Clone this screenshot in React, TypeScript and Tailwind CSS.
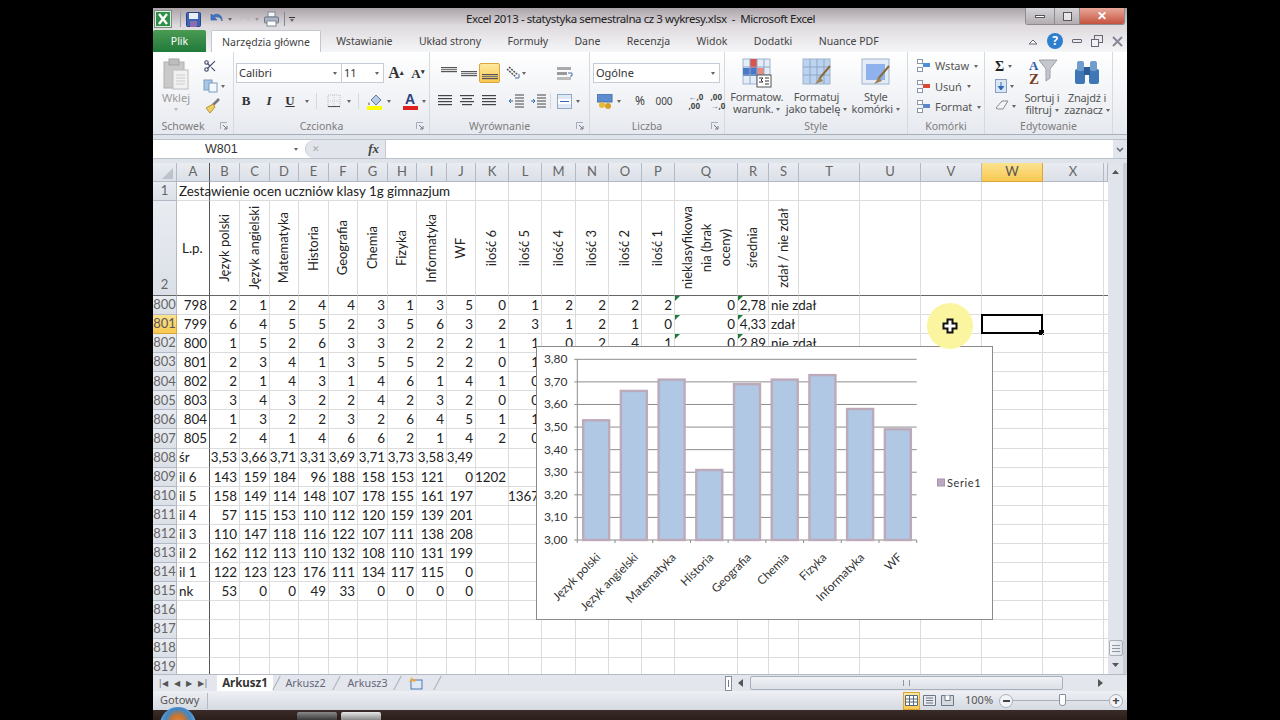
import React from 'react';
import { Scissors } from 'lucide-react';

const columns = ['A', 'B', 'C', 'D', 'E', 'F', 'G', 'H', 'I', 'J', 'K', 'L', 'M', 'N', 'O', 'P', 'Q', 'R', 'S', 'T', 'U', 'V', 'W', 'X'];

const subjects = ['Język polski', 'Język angielski', 'Matematyka', 'Historia', 'Geografia', 'Chemia', 'Fizyka', 'Informatyka', 'WF', 'ilość 6', 'ilość 5', 'ilość 4', 'ilość 3', 'ilość 2', 'ilość 1'];

const rows: Record<number, string[]> = {
    800: ['798', '2', '1', '2', '4', '4', '3', '1', '3', '5', '0', '1', '2', '2', '2', '2', '0', '2,78', 'nie zdał'],
    801: ['799', '6', '4', '5', '5', '2', '3', '5', '6', '3', '2', '3', '1', '2', '1', '0', '0', '4,33', 'zdał'],
    802: ['800', '1', '5', '2', '6', '3', '3', '2', '2', '2', '1', '1', '0', '2', '4', '1', '0', '2,89', 'nie zdał'],
    803: ['801', '2', '3', '4', '1', '3', '5', '5', '2', '2', '0', '1'],
    804: ['802', '2', '1', '4', '3', '1', '4', '6', '1', '4', '1', '0'],
    805: ['803', '3', '4', '3', '2', '2', '4', '2', '3', '2', '0', '0'],
    806: ['804', '1', '3', '2', '2', '3', '2', '6', '4', '5', '1', '1'],
    807: ['805', '2', '4', '1', '4', '6', '6', '2', '1', '4', '2', '0'],
    808: ['śr', '3,53', '3,66', '3,71', '3,31', '3,69', '3,71', '3,73', '3,58', '3,49'],
    809: ['il 6', '143', '159', '184', '96', '188', '158', '153', '121', '0', '1202'],
    810: ['il 5', '158', '149', '114', '148', '107', '178', '155', '161', '197', '', '1367'],
    811: ['il 4', '57', '115', '153', '110', '112', '120', '159', '139', '201'],
    812: ['il 3', '110', '147', '118', '116', '122', '107', '111', '138', '208'],
    813: ['il 2', '162', '112', '113', '110', '132', '108', '110', '131', '199'],
    814: ['il 1', '122', '123', '123', '176', '111', '134', '117', '115', '0'],
    815: ['nk', '53', '0', '0', '49', '33', '0', '0', '0', '0'],
    816: [], 817: [], 818: [], 819: [],
};

const chartData: [string, number][] = [
    ['Język polski', 3.53], ['Język angielski', 3.66], ['Matematyka', 3.71], ['Historia', 3.31], ['Geografia', 3.69],
    ['Chemia', 3.71], ['Fizyka', 3.73], ['Informatyka', 3.58], ['WF', 3.49],
];

function Caret({ className = '' }: { className?: string }) {
    return <span className={`inline-block h-0 w-0 border-x-[2.5px] border-t-[3px] border-x-transparent border-t-[#666] ${className}`} />;
}

function Slot({ className, children }: { className: string; children?: React.ReactNode }) {
    return <span className={`flex h-[20px] shrink-0 items-center justify-center ${className}`}>{children}</span>;
}

function Launcher() {
    return (
        <svg width="8" height="8" viewBox="0 0 8 8" className="mr-[5px] shrink-0">
            <path d="M.5 7V.5H7" fill="none" stroke="#aab" />
            <path d="M3 3l4 4M7 4v3H4" fill="none" stroke="#778" />
        </svg>
    );
}

function Group({ label, launcher, className, children }: { label: string; launcher?: boolean; className: string; children: React.ReactNode }) {
    return (
        <div className={`flex shrink-0 flex-col border-r border-[#d5d9e0] ${className}`}>
            <div className="h-[67px]">{children}</div>
            <div className="flex h-[16px] items-center text-[10.5px] text-[#7c7c7c]">
                <span className={`flex-1 text-center leading-none ${launcher ? 'pr-[7px]' : ''}`}>{label}</span>
                {launcher && <Launcher />}
            </div>
        </div>
    );
}

function Lines({ rows, size = 14 }: { rows: [number, number][]; size?: number }) {
    return (
        <svg width={size} height={size} viewBox="0 0 14 14">
            {rows.map(([x, y], i) => <rect key={i} x={x} y={y} width={14 - x * 2} height="1.2" fill="#444" />)}
        </svg>
    );
}

function AlignV({ y }: { y: number }) {
    return (
        <svg width="16" height="14" viewBox="0 0 16 14">
            <rect x="0" y={y} width="16" height="1.2" fill="#555" />
            <rect x="0" y={y + 2} width="16" height="1.2" fill="#777" />
            <rect x="0" y={y + 4} width="16" height="1.2" fill="#555" />
        </svg>
    );
}

function LargeIcon({ kind }: { kind: 'cond' | 'table' | 'cell' }) {
    return (
        <svg width="30" height="30" viewBox="0 0 30 30">
            <rect x="1" y="1" width="27" height="25" fill={kind === 'table' ? '#bcd3f0' : '#e4ecf7'} stroke="#9fb3cd" />
            {kind === 'cell' && <rect x="5" y="6" width="19" height="16" fill="#8fb2ec" />}
            {kind === 'cond' && <rect x="8" y="1" width="7" height="9" fill="#d9534a" />}
            {kind === 'cond' && <rect x="8" y="10" width="7" height="8" fill="#4a78c8" />}
            {kind === 'cond' && <rect x="1" y="10" width="7" height="8" fill="#4a78c8" />}
            {kind === 'cond' && <rect x="15" y="10" width="7" height="8" fill="#e88a7c" />}
            {kind !== 'cell' && <path d="M8 1v25M15 1v25M22 1v25M1 9h27M1 17h27" stroke="#8ea6c6" />}
            {kind === 'cond' && <rect x="15" y="17" width="14" height="12" fill="#fff" stroke="#555" />}
            {kind === 'cond' && <path d="M17 20h4l-2 2 2 2h-4M23 20h4M23 23h4M23 26h4" fill="none" stroke="#333" />}
            {kind !== 'cond' && <path d="M28 8L17 21" stroke="#8a6a3c" strokeWidth="2" />}
            {kind !== 'cond' && <path d="M18 19l-5 7 8-3z" fill="#a08050" />}
        </svg>
    );
}

function Ribbon() {
    return (
        <div className="flex h-[83px] shrink-0 border-b border-[#a9afb9] bg-gradient-to-b from-white to-[#e6e9ef] text-[#555]">
            <Group label="Schowek" launcher className="w-[81px]">
                <div className="flex pt-[4px]">
                    <div className="ml-[3px] flex w-[40px] flex-col items-center pt-[2px]">
                        <svg width="26" height="32" viewBox="0 0 26 32">
                            <rect x="1" y="4" width="20" height="26" fill="#c9c9c9" stroke="#b0b0b0" />
                            <rect x="6" y="1" width="10" height="6" fill="#bdbdbd" stroke="#a5a5a5" />
                            <rect x="10" y="12" width="15" height="19" fill="#f1f1f1" stroke="#bdbdbd" />
                            <path d="M13 17h9M13 20h9M13 23h9M13 26h9" stroke="#ccc" />
                        </svg>
                        <span className="mt-[1px] text-[11px] leading-[14px] text-[#9a9a9a]">Wklej</span>
                        <Caret className="mt-[3px] opacity-40" />
                    </div>
                    <div className="ml-[3px] flex flex-col">
                        <Slot className="w-[28px] justify-start pl-[4px]"><Scissors size={14} color="#46506a" strokeWidth={2} /></Slot>
                        <Slot className="w-[28px] gap-[3px] pl-[2px]">
                            <svg width="15" height="14" viewBox="0 0 15 14"><rect x="1" y="1" width="8" height="10" fill="#a9c6e8" stroke="#7d9cc0" /><rect x="6" y="4" width="8" height="9" fill="#f4f7fb" stroke="#7d9cc0" /></svg>
                            <Caret />
                        </Slot>
                        <Slot className="w-[28px] justify-start pl-[5px]">
                            <svg width="16" height="16" viewBox="0 0 16 16"><path d="M15 1L8 8" stroke="#777" strokeWidth="2.5" /><path d="M9 6L2 10l4 5 5-6z" fill="#f0cf62" stroke="#b59636" /></svg>
                        </Slot>
                    </div>
                </div>
            </Group>

            <Group label="Czcionka" launcher className="w-[196px]">
                <div className="mt-[11px] flex h-[20px] items-center pl-[2px] text-[11px] text-[#333]">
                    <div className="flex h-[20px] w-[106px] items-center justify-between border border-[#c6ccd5] bg-white pl-[2px] pr-[4px]">Calibri<Caret /></div>
                    <div className="flex h-[20px] w-[42px] items-center justify-between border-y border-r border-[#c6ccd5] bg-white pl-[2px] pr-[4px]">11<Caret /></div>
                    <Slot className="w-[24px]"><span className="font-['Liberation_Serif',serif] text-[16px] font-bold leading-none">A<sup className="text-[7px]">▴</sup></span></Slot>
                    <Slot className="w-[20px]"><span className="font-['Liberation_Serif',serif] text-[13px] font-bold leading-none">A<sup className="text-[7px]">▾</sup></span></Slot>
                </div>
                <div className="mt-[8px] flex items-center text-[#333]">
                    <Slot className="w-[24px] font-['Liberation_Serif',serif] text-[13px] font-bold">B</Slot>
                    <Slot className="w-[22px] font-['Liberation_Serif',serif] text-[13px] font-bold italic">I</Slot>
                    <Slot className="w-[20px] font-['Liberation_Serif',serif] text-[13px] font-bold underline">U</Slot>
                    <Slot className="w-[14px]"><Caret /></Slot>
                    <span className="ml-[2px] h-[16px] w-px bg-[#d5d9e0]" />
                    <Slot className="ml-[9px] w-[16px]">
                        <svg width="14" height="14" viewBox="0 0 14 14"><rect x="1" y="1" width="12" height="12" fill="none" stroke="#bbb" strokeDasharray="1 1" /><path d="M1 7h12M7 1v12" stroke="#ccc" strokeDasharray="1 1" /><path d="M1 12.5h12" stroke="#555" /></svg>
                    </Slot>
                    <Slot className="ml-[1px] w-[12px]"><Caret /></Slot>
                    <span className="ml-[3px] h-[16px] w-px bg-[#d5d9e0]" />
                    <Slot className="ml-[7px] w-[18px]">
                        <svg width="16" height="17" viewBox="0 0 16 17"><path d="M4 7l5-5 5 5-5 5z" fill="#b8cbe6" stroke="#64789a" /><path d="M2 9c-1 2-1 3 0 3s1-1 0-3" fill="#666" /><rect x="0" y="13" width="15" height="4" fill="#ffff00" /></svg>
                    </Slot>
                    <Slot className="w-[10px]"><Caret /></Slot>
                    <Slot className="ml-[7px] w-[18px]">
                        <span className="flex flex-col items-center">
                            <span className="font-['Liberation_Sans',sans-serif] text-[14px] font-bold leading-[13px] text-[#2b3f7a]">A</span>
                            <span className="h-[4px] w-[15px] bg-[#e02020]" />
                        </span>
                    </Slot>
                    <Slot className="w-[9px]"><Caret /></Slot>
                </div>
            </Group>

            <Group label="Wyrównanie" launcher className="w-[160px]">
                <div className="mt-[11px] flex items-center">
                    <Slot className="ml-[9px] w-[20px]"><AlignV y={1} /></Slot>
                    <Slot className="w-[20px]"><AlignV y={5} /></Slot>
                    <Slot className="w-[21px] rounded-[2px] border border-[#d9a53c] bg-gradient-to-b from-[#fde99c] to-[#fac84f]"><AlignV y={8} /></Slot>
                    <Slot className="w-[30px] gap-[2px]">
                        <svg width="15" height="14" viewBox="0 0 15 14"><path d="M2 3l9 8M4 1l9 8" stroke="#555" strokeWidth="1.5" strokeDasharray="2 1" /><path d="M10 12h4V8" fill="none" stroke="#4a6fa8" /></svg>
                        <Caret />
                    </Slot>
                    <Slot className="ml-[25px] w-[20px]">
                        <svg width="16" height="15" viewBox="0 0 16 15"><rect x="0" y="1" width="14" height="3" fill="#aaa" /><rect x="0" y="6" width="10" height="3" fill="#999" /><rect x="0" y="11" width="14" height="3" fill="#bbb" /><path d="M11 7h4v3h-2" fill="none" stroke="#4a6fa8" /></svg>
                    </Slot>
                </div>
                <div className="mt-[8px] flex items-center">
                    <Slot className="ml-[4px] w-[22px]"><Lines rows={[[0, 1], [0, 4], [0, 7], [0, 10]]} /></Slot>
                    <Slot className="w-[22px]"><Lines rows={[[0, 1], [2, 4], [0, 7], [2, 10]]} /></Slot>
                    <Slot className="w-[22px]"><Lines rows={[[0, 1], [0, 4], [0, 7], [0, 10]]} /></Slot>
                    <Slot className="ml-[5px] w-[22px]">
                        <svg width="16" height="14" viewBox="0 0 16 14"><path d="M7 1h9M7 4h9M7 7h9M7 10h9M7 13h9" stroke="#444" /><path d="M5 7H1M3 5L1 7l2 2" fill="none" stroke="#3468b0" /></svg>
                    </Slot>
                    <Slot className="w-[22px]">
                        <svg width="16" height="14" viewBox="0 0 16 14"><path d="M7 1h9M7 4h9M7 7h9M7 10h9M7 13h9" stroke="#444" /><path d="M1 7h4M3 5l2 2-2 2" fill="none" stroke="#3468b0" /></svg>
                    </Slot>
                    <span className="ml-[1px] h-[16px] w-px bg-[#d5d9e0]" />
                    <Slot className="ml-[6px] w-[15px]">
                        <svg width="15" height="15" viewBox="0 0 15 15"><rect x=".5" y=".5" width="14" height="14" fill="#dfe9f5" stroke="#93a8c4" /><rect x="1" y="5" width="13" height="5" fill="#fff" /><path d="M3 7.5h9" stroke="#3468b0" /></svg>
                    </Slot>
                    <Slot className="w-[12px]"><Caret /></Slot>
                </div>
            </Group>

            <Group label="Liczba" launcher className="w-[135px]">
                <div className="ml-[3px] mt-[11px] flex h-[20px] w-[127px] items-center justify-between border border-[#c6ccd5] bg-white pl-[2px] pr-[4px] text-[11px] text-[#333]">Ogólne<Caret /></div>
                <div className="mt-[8px] flex items-center text-[#444]">
                    <Slot className="ml-[7px] w-[16px]">
                        <svg width="16" height="15" viewBox="0 0 16 15"><rect x="0" y="0" width="15" height="8" fill="#5d8ccf" stroke="#466fa8" /><circle cx="5" cy="11" r="3" fill="#e8b93a" /><circle cx="11" cy="12" r="3" fill="#d59f24" /></svg>
                    </Slot>
                    <Slot className="w-[11px]"><Caret /></Slot>
                    <Slot className="ml-[6px] w-[20px] text-[12px]">%</Slot>
                    <Slot className="ml-[2px] w-[24px] text-[10px]">000</Slot>
                    <span className="ml-[2px] h-[16px] w-px bg-[#d5d9e0]" />
                    <Slot className="ml-[7px] w-[22px]">
                        <span className="flex flex-col text-[8px] font-bold leading-[9px]"><span><span className="text-[#3468b0]">←</span>,0</span><span>,00</span></span>
                    </Slot>
                    <Slot className="w-[22px]">
                        <span className="flex flex-col text-[8px] font-bold leading-[9px]"><span>,00</span><span><span className="text-[#3468b0]">→</span>,0</span></span>
                    </Slot>
                </div>
            </Group>

            <Group label="Style" className="w-[183px]">
                <div className="flex pt-[6px] text-[11px] leading-[12px]">
                    {[
                        { kind: 'cond' as const, top: 'Formatow.', bottom: 'warunk.', w: 'w-[64px]' },
                        { kind: 'table' as const, top: 'Formatuj', bottom: 'jako tabelę', w: 'w-[56px]' },
                        { kind: 'cell' as const, top: 'Style', bottom: 'komórki', w: 'w-[63px]' },
                    ].map((b) => (
                        <div key={b.top} className={`flex flex-col items-center whitespace-nowrap ${b.w}`}>
                            <LargeIcon kind={b.kind} />
                            <span className="mt-[3px] tracking-[-0.2px]">{b.top}</span>
                            <span className="flex items-center gap-[3px] tracking-[-0.2px]">{b.bottom}<Caret /></span>
                        </div>
                    ))}
                </div>
            </Group>

            <Group label="Komórki" className="w-[77px]">
                <div className="flex flex-col pl-[9px] pt-[4px] text-[11px]">
                    {[
                        { t: 'Wstaw', c: '#4a8fd8' },
                        { t: 'Usuń', c: '#d9482f' },
                        { t: 'Format', c: '#5a88c4' },
                    ].map((r) => (
                        <span key={r.t} className="flex h-[20.5px] items-center">
                            <svg width="14" height="14" viewBox="0 0 14 14" className="mr-[4px]">
                                <rect x=".5" y=".5" width="5" height="4" fill="#fff" stroke="#8a96a8" />
                                <rect x=".5" y="8.5" width="5" height="4" fill="#fff" stroke="#8a96a8" />
                                <rect x="6" y="4" width="7" height="4" fill={r.c} />
                            </svg>
                            {r.t}
                            <Caret className="ml-[5px]" />
                        </span>
                    ))}
                </div>
            </Group>

            <Group label="Edytowanie" className="w-[128px]">
                <div className="flex pt-[4px]">
                    <div className="ml-[10px] flex w-[24px] flex-col">
                        <Slot className="h-[20.5px] justify-start gap-[4px] font-['Liberation_Serif',serif] text-[14px] font-bold text-[#222]">Σ<Caret /></Slot>
                        <Slot className="h-[20.5px] justify-start gap-[3px]">
                            <svg width="12" height="14" viewBox="0 0 12 14"><rect x=".5" y=".5" width="11" height="13" fill="#dbe6f4" stroke="#8aa0bf" /><path d="M6 3v7M3 7l3 4 3-4" fill="#2c6bc0" stroke="#2c6bc0" /></svg>
                            <Caret />
                        </Slot>
                        <Slot className="h-[20.5px] justify-start gap-[3px]">
                            <svg width="14" height="12" viewBox="0 0 14 12"><path d="M1 8l6-7h6L8 9H3z" fill="#f3f3f5" stroke="#8a8a96" /></svg>
                            <Caret />
                        </Slot>
                    </div>
                    <div className="ml-[1px] flex w-[44px] flex-col items-center whitespace-nowrap pt-[2px] text-[11px] leading-[12px] tracking-[-0.2px]">
                        <svg width="30" height="28" viewBox="0 0 30 28">
                            <path d="M12 2h18l-7 9v9l-4 3V11z" fill="#c4c8ce" stroke="#9a9fa8" />
                            <text x="2" y="12" fontFamily="Liberation Serif, serif" fontSize="13" fontWeight="700" fill="#2d5da8">A</text>
                            <text x="2" y="26" fontFamily="Liberation Serif, serif" fontSize="15" fontWeight="700" fill="#7a3a1e">Z</text>
                        </svg>
                        <span className="mt-[6px]">Sortuj i</span>
                        <span className="flex items-center gap-[3px]">filtruj<Caret /></span>
                    </div>
                    <div className="flex w-[46px] flex-col items-center whitespace-nowrap pt-[2px] text-[11px] leading-[12px] tracking-[-0.2px]">
                        <svg width="30" height="28" viewBox="0 0 30 28">
                            <rect x="3" y="11" width="10" height="15" rx="2" fill="#3f76b5" />
                            <rect x="17" y="11" width="10" height="15" rx="2" fill="#3f76b5" />
                            <rect x="5" y="3" width="7" height="10" rx="2" fill="#6f9ccc" />
                            <rect x="18" y="3" width="7" height="10" rx="2" fill="#6f9ccc" />
                            <rect x="12" y="9" width="6" height="8" fill="#2d5d96" />
                        </svg>
                        <span className="mt-[6px]">Znajdź i</span>
                        <span className="flex items-center gap-[3px]">zaznacz<Caret /></span>
                    </div>
                </div>
            </Group>
        </div>
    );
}

function Titlebar() {
    return (
        <div className="flex h-[22px] items-center">
            <svg width="18" height="18" viewBox="0 0 18 18" className="ml-[1px]">
                <rect x=".5" y=".5" width="17" height="17" fill="#dfeee2" stroke="#7b8f80" />
                <rect x="2" y="2" width="14" height="14" fill="#2f8f4a" />
                <path d="M5 4l8 10M13 4L5 14" stroke="#fff" strokeWidth="2.4" />
            </svg>
            <span className="ml-[8px] h-[16px] w-px bg-[#9aa0a8]" />
            <svg width="15" height="15" viewBox="0 0 15 15" className="ml-[5px]">
                <rect x=".5" y=".5" width="14" height="14" rx="1" fill="#3d63b5" stroke="#2b4488" />
                <rect x="3" y="1" width="9" height="6" fill="#e8eef8" />
                <rect x="4" y="9" width="7" height="6" fill="#8b6db0" />
            </svg>
            <svg width="16" height="14" viewBox="0 0 16 14" className="ml-[8px]">
                <path d="M2 2v6h6L5.5 5.5C8 4 12 5 13 9c1-5-4-9-9-5.5z" fill="#3f74c4" stroke="#2d5aa3" strokeWidth=".6" />
            </svg>
            <Caret className="ml-[3px]" />
            <svg width="14" height="12" viewBox="0 0 14 12" className="ml-[6px] opacity-50">
                <path d="M12 2v5H7l2-2C7 4 3 5 2 8c-1-4 4-7 8-4.5z" fill="#b8bcc4" />
            </svg>
            <Caret className="ml-[3px] opacity-50" />
            <svg width="15" height="16" viewBox="0 0 15 16" className="ml-[5px]">
                <rect x="4" y="1" width="7" height="5" fill="#f6f6f6" stroke="#7d8799" />
                <rect x=".5" y="6" width="14" height="6" rx="1" fill="#aab4c2" stroke="#6b7687" />
                <rect x="3" y="10" width="9" height="5" fill="#fff" stroke="#7d8799" />
            </svg>
            <span className="ml-[5px] h-[14px] w-px bg-[#80868f]" />
            <span className="ml-[4px] flex flex-col items-center gap-[1px]">
                <span className="h-px w-[6px] bg-[#333]" />
                <Caret className="border-t-[#333]" />
            </span>
            <span className="ml-[171px] whitespace-pre font-['Noto_Sans',sans-serif] text-[11.5px] leading-none tracking-[-0.42px] text-[#222]">Excel 2013 - statystyka semestralna cz 3 wykresy.xlsx  -  Microsoft Excel</span>
            <div className="ml-auto mr-[2px] flex h-[17px] self-start overflow-hidden rounded-b-[3px] border border-t-0 border-[#8f8a8e]">
                <span className="flex w-[29px] items-center justify-center border-r border-[#8f8a8e] bg-gradient-to-b from-[#d6d4d8] to-[#b3adb2]"><span className="h-[3px] w-[10px] border border-[#555] bg-white" /></span>
                <span className="flex w-[25px] items-center justify-center border-r border-[#8f8a8e] bg-gradient-to-b from-[#d6d4d8] to-[#b3adb2]"><span className="h-[9px] w-[9px] border border-[#555] bg-white/60" /></span>
                <span className="flex w-[44px] items-center justify-center bg-gradient-to-b from-[#e8a89a] to-[#c4503e] text-[12px] font-bold leading-none text-white">✕</span>
            </div>
        </div>
    );
}

function Tabs() {
    return (
        <div className="flex h-[22px] items-end font-['Noto_Sans',sans-serif] text-[10.5px] text-[#444]">
            <div className="flex h-[22px] w-[53px] items-center justify-center rounded-t-[2px] bg-gradient-to-b from-[#4a9a52] to-[#1f7a3a] pt-[2px] text-white">Plik</div>
            <div className="ml-[5px] flex h-[22px] w-[110px] items-center justify-center rounded-t-[2px] border-x border-t border-[#c3c8d0] bg-white pt-[2px]">Narzędzia główne</div>
            <div className="flex h-[22px] items-center pl-[2px] pt-[2px]">
                {['Wstawianie', 'Układ strony', 'Formuły', 'Dane', 'Recenzja', 'Widok', 'Dodatki', 'Nuance PDF'].map((t) => (
                    <span key={t} className="whitespace-nowrap px-[13.2px]">{t}</span>
                ))}
            </div>
            <div className="ml-auto mr-[4px] flex h-[22px] items-center gap-[9px]">
                <svg width="10" height="7" viewBox="0 0 10 7"><path d="M1 6l4-4 4 4z" fill="#fff" stroke="#667" /></svg>
                <span className="flex h-[16px] w-[16px] items-center justify-center rounded-full bg-[#2f7fd0] text-[12px] font-bold leading-none text-white">?</span>
                <span className="h-[4px] w-[10px] rounded-[1px] border border-[#667]" />
                <svg width="12" height="12" viewBox="0 0 12 12"><rect x="3.5" y=".5" width="8" height="7" fill="none" stroke="#667" /><rect x=".5" y="4.5" width="7" height="7" fill="#f2f3f5" stroke="#667" /></svg>
                <svg width="11" height="11" viewBox="0 0 11 11"><path d="M1 1l9 9M10 1l-9 9" stroke="#889" strokeWidth="2" /></svg>
            </div>
        </div>
    );
}

function FormulaBar() {
    return (
        <div className="flex h-[28px] shrink-0 flex-col justify-center bg-[#dfe3ea]">
            <div className="flex h-[20px] items-stretch border-y border-[#bcc2cc] bg-white text-[13px]">
                <div className="flex w-[152px] items-center pl-[52px] font-['Liberation_Sans',sans-serif] text-[12.5px] text-[#333]">W801<Caret className="ml-[56px] border-t-[#333]" /></div>
                <div className="flex w-[80px] items-center justify-between rounded-l-[10px] border-l border-[#c5cad2] bg-[#e2e6ec] pl-[6px] pr-[6px]">
                    <span className="text-[9px] text-[#aaa]">✕</span>
                    <span className="font-['Liberation_Serif',serif] text-[13px] font-bold italic text-[#444]">fx</span>
                </div>
                <div className="flex-1 border-l border-[#c5cad2]" />
                <div className="flex w-[14px] items-center justify-center bg-[#e2e6ec]"><svg width="8" height="5" viewBox="0 0 8 5"><path d="M1 1l3 3 3-3" fill="none" stroke="#667" strokeWidth="1.5" /></svg></div>
            </div>
        </div>
    );
}

function Chart() {
    const left = 41.3;
    const right = 380.7;
    const top = 13.3;
    const bottom = 194;
    const y = (v: number) => bottom - ((v - 3) / 0.8) * (bottom - top);
    const step = (right - left) / chartData.length;
    const ticks = [3.8, 3.7, 3.6, 3.5, 3.4, 3.3, 3.2, 3.1, 3.0];
    return (
        <div className="absolute left-[383px] top-[183px] h-[274px] w-[457px] border border-[#8a8a8a] bg-white">
            <svg width="457" height="274" viewBox="0 0 457 274" className="-ml-px -mt-px block font-['Lato',sans-serif]">
                {ticks.map((t) => (
                    <g key={t}>
                        <line x1={left - 3} x2={right} y1={y(t)} y2={y(t)} stroke="#8c8c8c" />
                        <text x="31.5" y={y(t) + 4} textAnchor="end" fontSize="12" fill="#333">{t.toFixed(2).replace('.', ',')}</text>
                    </g>
                ))}
                <line x1={left} x2={left} y1={top} y2={bottom} stroke="#8c8c8c" />
                {chartData.map(([name, v], i) => {
                    const cx = left + step * (i + 0.5);
                    return (
                        <g key={name}>
                            <rect x={cx - 13} y={y(v)} width="26" height={bottom - y(v)} fill="#b0c8e4" stroke="#bcaabb" strokeWidth="2.4" />
                            <line x1={left + step * i} x2={left + step * i} y1={bottom} y2={bottom + 3} stroke="#8c8c8c" />
                            <text transform={`translate(${cx + 5} 212) rotate(-45)`} textAnchor="end" fontSize="11.8" fill="#333">{name}</text>
                        </g>
                    );
                })}
                <line x1={right} x2={right} y1={bottom} y2={bottom + 3} stroke="#8c8c8c" />
                <rect x="401.5" y="133" width="7" height="7" fill="#b9a8c0" stroke="#a893ac" />
                <text x="411" y="141" fontSize="11" letterSpacing=".6" fill="#333">Serie1</text>
            </svg>
        </div>
    );
}

function Sheet() {
    const head = 'flex items-center justify-center border-r border-b border-[#b4bac5] bg-gradient-to-b from-[#e9ecf1] to-[#dbdfe7] text-[13px] text-[#666]';
    const cell = 'relative flex items-center whitespace-nowrap border-r border-b border-[#dcdcdc] px-[2px] text-[13.4px] text-[#222]';
    return (
        <div className="relative h-[511px] w-[955px] shrink-0 overflow-hidden bg-white font-['Lato',sans-serif]">
            <div className="grid grid-cols-[24px_33px_30px_30px_29px_30px_29px_30px_29px_30px_29px_33px_33px_34px_33px_33px_33px_63px_31px_30px_61px_61px_61px_61px_61px_4px] grid-rows-[19px_19px_95px_repeat(20,19.07px)]">
                <div className={`${head} items-end justify-end pb-[2px] pr-[3px]`}>
                    <svg width="11" height="11" viewBox="0 0 11 11"><path d="M11 0v11H0z" fill="#bcc2cc" /></svg>
                </div>
                {columns.map((c) => (
                    <div key={c} className={c === 'W' ? 'flex items-center justify-center border-b border-r border-[#d9a53c] bg-gradient-to-b from-[#fbe38f] to-[#f9c84e] text-[13px] text-[#555]' : c === 'A' ? `${head} border-r-[#555]` : head}>{c}</div>
                ))}
                <div className={head}>&nbsp;</div>

                <div className={head}>1</div>
                <div className="relative flex items-center whitespace-nowrap border-r border-b border-r-[#555] border-b-[#dcdcdc] pl-[2px] text-[13.4px] text-[#222]">
                    <span className="relative z-10">Zestawienie ocen uczniów klasy 1g gimnazjum</span>
                </div>
                {columns.slice(1).map((c, i) => (
                    <div key={c} className={i < 8 ? 'border-b border-[#dcdcdc]' : 'border-r border-b border-[#dcdcdc]'} />
                ))}
                <div className="border-b border-[#dcdcdc]" />

                <div className={`${head} items-end border-b-[#666] pb-[1px]`}>2</div>
                <div className="flex items-center border-r border-b border-r-[#555] border-b-[#666] pl-[5px] text-[13.4px] text-[#222]">L.p.</div>
                {subjects.map((s) => (
                    <div key={s} className="flex items-center justify-center border-r border-b border-r-[#dcdcdc] border-b-[#666] text-[13px] text-[#222]">
                        <span className="rotate-180 whitespace-nowrap [writing-mode:vertical-rl]">{s}</span>
                    </div>
                ))}
                <div className="flex items-center justify-center border-r border-b border-r-[#dcdcdc] border-b-[#666] text-[13px] leading-[19px] text-[#222]">
                    <span className="rotate-180 whitespace-pre text-center [writing-mode:vertical-rl]">{'nieklasyfikowa\nnia (brak\noceny)'}</span>
                </div>
                <div className="flex items-center justify-center border-r border-b border-r-[#dcdcdc] border-b-[#666] text-[13px] text-[#222]">
                    <span className="rotate-180 whitespace-nowrap [writing-mode:vertical-rl]">średnia</span>
                </div>
                <div className="flex items-center justify-center border-r border-b border-r-[#dcdcdc] border-b-[#666] text-[13px] text-[#222]">
                    <span className="rotate-180 whitespace-nowrap [writing-mode:vertical-rl]">zdał / nie zdał</span>
                </div>
                {['T', 'U', 'V', 'W', 'X'].map((c) => <div key={c} className="border-r border-b border-r-[#dcdcdc] border-b-[#666]" />)}
                <div className="border-b border-[#666]" />

                {Object.keys(rows).map((key) => {
                    const n = Number(key);
                    const values = rows[n];
                    return (
                        <React.Fragment key={n}>
                            <div className={n === 801 ? 'flex items-center justify-center border-r border-b border-[#d9a53c] bg-gradient-to-b from-[#fbe38f] to-[#f9c84e] text-[13px] text-[#555]' : head}>{n}</div>
                            {columns.map((c, i) => {
                                const v = values[i] ?? '';
                                const numeric = /^[\d,]+$/.test(v);
                                const marked = n <= 802 && (c === 'Q' || c === 'R');
                                return (
                                    <div key={c} className={`${cell} ${numeric ? 'justify-end' : 'justify-start'} ${c === 'A' ? 'border-r-[#555]' : ''}`}>
                                        {marked && <span className="absolute left-0 top-0 h-0 w-0 border-r-[5px] border-t-[5px] border-r-transparent border-t-[#1d7a3a]" />}
                                        {v}
                                        {c === 'W' && n === 801 && (
                                            <span className="absolute -left-px -top-px h-[20px] w-[62px] border-2 border-black">
                                                <span className="absolute -bottom-[3px] -right-[3px] h-[5px] w-[5px] bg-black" />
                                            </span>
                                        )}
                                    </div>
                                );
                            })}
                            <div className="border-b border-[#dcdcdc]" />
                        </React.Fragment>
                    );
                })}
            </div>
            <Chart />
            <div className="absolute left-[774px] top-[140px] flex h-[46px] w-[46px] items-center justify-center rounded-full bg-[#fbf5a0]">
                <svg width="16" height="16" viewBox="0 0 16 16">
                    <path d="M5.5 1.5h5v4h4v5h-4v4h-5v-4h-4v-5h4z" fill="#fff" stroke="#111" strokeWidth="2" />
                </svg>
            </div>
        </div>
    );
}

function VScroll() {
    return (
        <div className="flex h-[511px] w-[15px] flex-col items-center justify-between bg-[#e1e5eb]">
            <svg width="9" height="18" viewBox="0 0 9 18" className="shrink-0"><path d="M1 11l3.5-4L8 11z" fill="#555" /></svg>
            <div className="flex flex-col items-center">
                <div className="flex h-[16px] w-[14px] flex-col justify-center gap-[2px] rounded-[2px] border border-[#a9b0bb] bg-gradient-to-r from-[#f2f4f7] to-[#dfe3e9] px-[2px]">
                    <span className="h-px bg-[#8f96a1]" />
                    <span className="h-px bg-[#8f96a1]" />
                    <span className="h-px bg-[#8f96a1]" />
                </div>
                <svg width="9" height="18" viewBox="0 0 9 18" className="shrink-0"><path d="M1 7l3.5 4L8 7z" fill="#555" /></svg>
            </div>
        </div>
    );
}

function TabSlant({ className }: { className: string }) {
    return <span className={`h-[16px] w-px shrink-0 rotate-[28deg] bg-[#aab0bb] ${className}`} />;
}

function SheetTabs() {
    return (
        <div className="flex h-[17px] shrink-0 items-center border-t border-[#b4bac5] bg-[#e3e6ec] font-['Noto_Sans',sans-serif] text-[10.8px] text-[#667]">
            <div className="flex w-[58px] shrink-0 items-center justify-around pl-[2px] text-[8px] leading-none text-[#555]">
                <span>|◀</span><span>◀</span><span>▶</span><span>▶|</span>
            </div>
            <span className="ml-[6px] flex h-[16px] w-[56px] items-center justify-center bg-white text-[11.5px] font-bold text-[#333]">Arkusz1</span>
            <TabSlant className="ml-[3px]" />
            <span className="ml-[8px] w-[41px] text-center">Arkusz2</span>
            <TabSlant className="ml-[10px]" />
            <span className="ml-[10px] w-[41px] text-center">Arkusz3</span>
            <TabSlant className="ml-[9px]" />
            <svg width="15" height="13" viewBox="0 0 15 13" className="ml-[10px]">
                <rect x="3" y="3" width="11" height="9" fill="#dfe9f5" stroke="#4a78b0" />
                <path d="M4 0l1.5 3L9 2 6.5 5 4 4 1 5z" fill="#e8a83a" />
            </svg>
            <TabSlant className="ml-[14px]" />
            <span className="ml-[287px] flex h-[15px] w-[7px] items-center justify-center border border-[#8a909b] bg-white"><span className="h-[7px] w-px bg-[#778]" /></span>
            <svg width="8" height="10" viewBox="0 0 8 10" className="ml-[5px]"><path d="M6 1L1 5l5 4z" fill="#555" /></svg>
            <div className="ml-[5px] flex h-[14px] w-[313px] items-center justify-center rounded-[2px] border border-[#a9b0bb] bg-gradient-to-b from-[#f0f2f5] to-[#dce0e7]">
                <span className="h-[6px] w-[7px] border-x border-[#8f96a1]" />
            </div>
            <svg width="8" height="10" viewBox="0 0 8 10" className="ml-[33px]"><path d="M2 1l5 4-5 4z" fill="#555" /></svg>
        </div>
    );
}

function StatusBar() {
    return (
        <div className="flex h-[19px] shrink-0 items-center bg-gradient-to-b from-[#eef0f4] to-[#d5d9e1] font-['Noto_Sans',sans-serif] text-[11px] text-[#555]">
            <span className="ml-[7px] w-[47px]">Gotowy</span>
            <span className="h-[16px] w-px bg-[#b4bac5]" />
            <div className="ml-[695px] flex h-[18px] w-[17px] items-center justify-center border border-[#d9a53c] bg-gradient-to-b from-[#fde99c] to-[#fac84f]">
                <svg width="13" height="11" viewBox="0 0 13 11"><path d="M.5.5h12v10H.5zM.5 4h12M.5 7h12M4.5.5v10M8.5.5v10" fill="#fff" stroke="#56677f" /></svg>
            </div>
            <svg width="13" height="11" viewBox="0 0 13 11" className="ml-[3px]"><path d="M.5.5h12v10H.5z" fill="#e6e9ee" stroke="#6b7687" /><path d="M3 3h7M3 5.5h7M3 8h7" stroke="#6b7687" /></svg>
            <svg width="13" height="11" viewBox="0 0 13 11" className="ml-[5px]"><path d="M.5.5h12v10H.5z" fill="#d4d8df" stroke="#6b7687" /><path d="M4 .5v5h5v-5" fill="#fff" stroke="#6b7687" /></svg>
            <span className="ml-[11px] w-[26px] text-center">100%</span>
            <span className="ml-[8px] flex h-[14px] w-[14px] items-center justify-center rounded-full border border-[#a9b0bb] bg-[#f3f4f7]"><span className="h-[2px] w-[7px] bg-[#444]" /></span>
            <div className="relative h-px w-[96px] bg-[#a9b0bb]">
                <span className="absolute -top-[6px] left-[46px] h-[12px] w-[7px] rounded-b-[3px] border border-[#8a909b] bg-white" />
            </div>
            <span className="relative flex h-[14px] w-[14px] items-center justify-center rounded-full border border-[#a9b0bb] bg-[#f3f4f7] text-[13px] font-bold leading-none text-[#444]">+</span>
        </div>
    );
}

export default function App() {
    return (
        <div className="relative h-[720px] w-[1280px] overflow-hidden bg-black pl-[153px] pt-[8px]">
            <div className="flex h-[712px] w-[974px] flex-col bg-[#c9ced6] font-['Noto_Sans',sans-serif]">
                <div className="shrink-0 bg-gradient-to-b from-[#aba3a9] via-[#dedadd] via-40% to-[#f5f6f8]">
                    <Titlebar />
                    <Tabs />
                </div>
                <Ribbon />
                <FormulaBar />
                <div className="flex shrink-0">
                    <Sheet />
                    <VScroll />
                </div>
                <SheetTabs />
                <StatusBar />
                <div className="flex h-[10px] shrink-0 gap-[4px] bg-gradient-to-b from-[#3a2c28] to-[#2a1e1a] pl-[144px] pt-[2px]">
                    <span className="h-[8px] w-[40px] rounded-t-[2px] bg-gradient-to-b from-[#8a8a8a] to-[#3a3a3a]" />
                    <span className="h-[8px] w-[40px] rounded-t-[2px] bg-gradient-to-b from-[#e8e8e8] to-[#8a8a8a]" />
                </div>
            </div>
            <div className="absolute left-[160px] top-[707px] h-[36px] w-[36px] rounded-full bg-[radial-gradient(circle_at_50%_40%,#e8843a_0%,#c8762e_22%,#3f86c8_45%,#b9d4ea_100%)]" />
        </div>
    );
}
